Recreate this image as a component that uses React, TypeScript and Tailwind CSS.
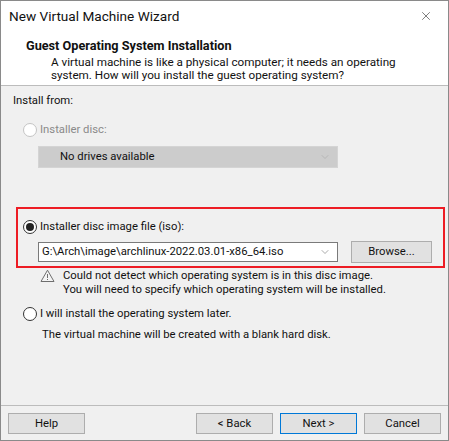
import { X, ChevronDown } from "lucide-react";

function Radio({ checked = false, disabled = false }: { checked?: boolean; disabled?: boolean }) {
  return (
    <span
      className={`flex h-[14px] w-[14px] shrink-0 items-center justify-center rounded-full border bg-white ${
        disabled ? "border-[#c4c4c4]" : "border-[#333333]"
      }`}
    >
      {checked && <span className="h-[8px] w-[8px] rounded-full bg-[#222222]" />}
    </span>
  );
}

function Button({ label, active = false }: { label: string; active?: boolean }) {
  return (
    <button
      className={`h-[21px] w-[77px] bg-[#e1e1e1] text-[11.3px] leading-none text-[#111111] border ${
        active ? "border-[#0078d7]" : "border-[#adadad]"
      }`}
    >
      {label}
    </button>
  );
}

export default function App() {
  return (
    <div className="flex h-[441px] w-[449px] flex-col border border-[#8a8a8a] bg-[#f0f0f0] font-['Roboto',sans-serif] text-[11.3px] text-[#111111]">
      <div className="flex h-[30px] shrink-0 items-center justify-between bg-white pl-[8px] pr-[15px]">
        <span className="text-[13.6px] text-[#111111]">New Virtual Machine Wizard</span>
        <X size={14} strokeWidth={1} className="text-[#222222]" />
      </div>

      <div className="h-[55px] shrink-0 border-b border-[#bcbcbc] bg-white pl-[25px]">
        <div className="pt-[7px] text-[12.7px] font-bold leading-[16px]">Guest Operating System Installation</div>
        <div className="pl-[25px] pt-[2px] text-[11.7px] leading-[13px]">
          A virtual machine is like a physical computer; it needs an operating
          <br />
          system. How will you install the guest operating system?
        </div>
      </div>

      <div className="flex-1 pt-[6px]">
        <div className="pl-[12px] leading-[18px]">Install from:</div>

        <div className="mt-[12px] flex items-center gap-[3px] pl-[22px] leading-[16px] text-[#8a8a8a]">
          <Radio disabled />
          <span>Installer disc:</span>
        </div>
        <div className="ml-[37px] mt-[8px] flex h-[22px] w-[300px] items-center justify-between border border-[#d4d4d4] bg-[#cccccc] pl-[21px] pr-[6px]">
          <span>No drives available</span>
          <ChevronDown size={12} strokeWidth={1} className="text-[#a0a0a0]" />
        </div>

        <div className="ml-[15px] mt-[39px] h-[61px] w-[429px] border-2 border-[#ed1c24] pl-[5px] pt-[10px]">
          <div className="flex items-center gap-[3px] leading-[16px]">
            <Radio checked />
            <span>Installer disc image file (iso):</span>
          </div>
          <div className="mt-[6px] flex items-center">
            <div className="ml-[15px] flex h-[20px] w-[300px] items-center justify-between border border-[#7a7a7a] bg-white pl-[3px] pr-[6px]">
              <span>G:\Arch\image\archlinux-2022.03.01-x86_64.iso</span>
              <ChevronDown size={12} strokeWidth={1} className="text-[#555555]" />
            </div>
            <button className="ml-[13px] h-[22px] w-[81px] border border-[#adadad] bg-[#e1e1e1] leading-none">
              Browse...
            </button>
          </div>
        </div>

        <div className="mt-[1px] flex pl-[39px] leading-[14px]">
          <svg width="15" height="14" viewBox="0 0 15 14" className="shrink-0">
            <path d="M7.5 1.2 L14 12.5 H1 Z" fill="#f4f4f4" stroke="#6e6e6e" strokeWidth="1" />
            <path d="M7.5 5 V9 M7.5 10 V11" stroke="#6e6e6e" strokeWidth="1" />
          </svg>
          <div className="pl-[8px]">
            Could not detect which operating system is in this disc image.
            <br />
            You will need to specify which operating system will be installed.
          </div>
        </div>

        <div className="mt-[9px] flex items-center gap-[3px] pl-[22px] leading-[16px]">
          <Radio />
          <span>I will install the operating system later.</span>
        </div>
        <div className="mt-[6px] pl-[41px] leading-[14px]">
          The virtual machine will be created with a blank hard disk.
        </div>
      </div>

      <div className="flex h-[35px] shrink-0 items-start border-t border-[#bcbcbc] pl-[7px] pr-[7px] pt-[7px]">
        <Button label="Help" />
        <div className="ml-auto flex gap-[7px]">
          <Button label="< Back" />
          <Button label="Next >" active />
          <Button label="Cancel" />
        </div>
      </div>
    </div>
  );
}
